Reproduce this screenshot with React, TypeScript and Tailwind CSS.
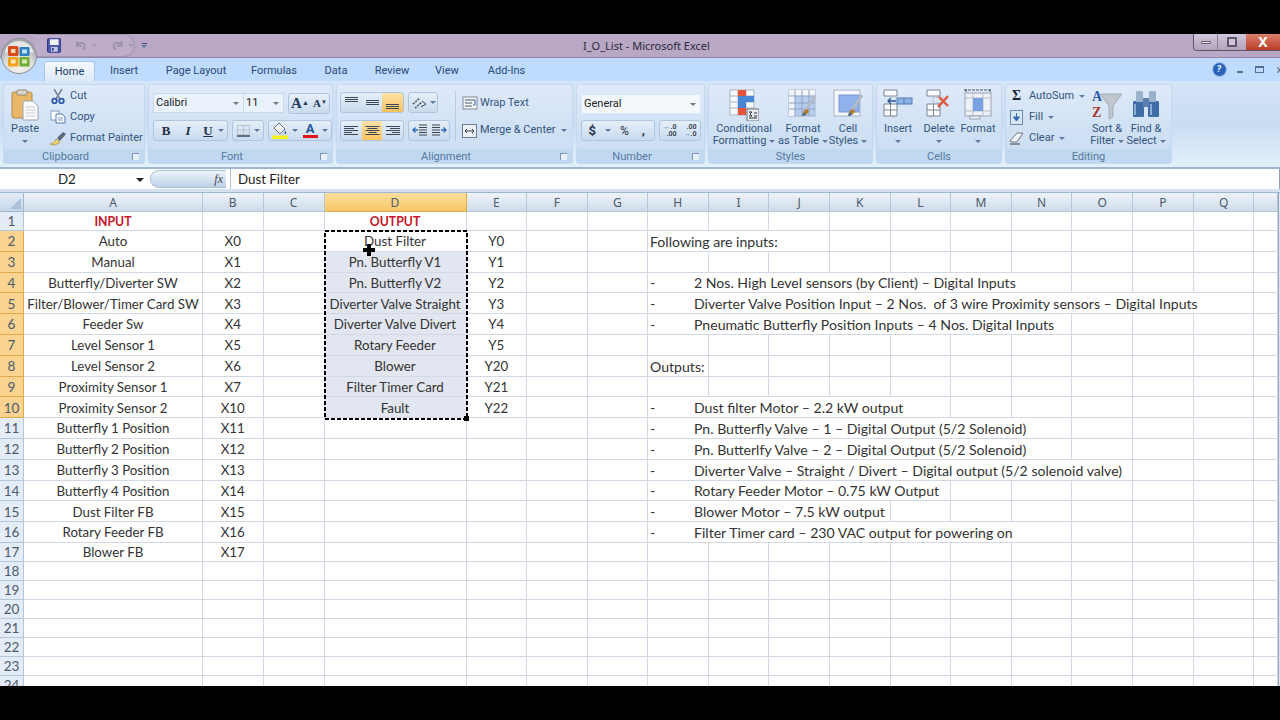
import * as React from "react";

const colA = ["INPUT", "Auto", "Manual", "Butterfly/Diverter SW", "Filter/Blower/Timer Card SW", "Feeder Sw", "Level Sensor 1", "Level Sensor 2", "Proximity Sensor 1", "Proximity Sensor 2", "Butterfly 1 Position", "Butterfly 2 Position", "Butterfly 3 Position", "Butterfly 4 Position", "Dust Filter FB", "Rotary Feeder FB", "Blower FB"];
const colB = ["", "X0", "X1", "X2", "X3", "X4", "X5", "X6", "X7", "X10", "X11", "X12", "X13", "X14", "X15", "X16", "X17"];
const colD = ["OUTPUT", "Dust Filter", "Pn. Butterfly V1", "Pn. Butterfly V2", "Diverter Valve Straight", "Diverter Valve Divert", "Rotary Feeder", "Blower", "Filter Timer Card", "Fault"];
const colE = ["", "Y0", "Y1", "Y2", "Y3", "Y4", "Y5", "Y20", "Y21", "Y22"];
const letters = ["A", "B", "C", "D", "E", "F", "G", "H", "I", "J", "K", "L", "M", "N", "O", "P", "Q", ""];

type Note = { text: string; n: number; span: string; dash?: boolean };
const notes: Record<number, Note> = {
  2: { text: "Following are inputs:", n: 3, span: "col-span-3" },
  4: { text: "2 Nos. High Level sensors (by Client) – Digital Inputs", n: 7, span: "col-span-7", dash: true },
  5: { text: "Diverter Valve Position Input – 2 Nos.  of 3 wire Proximity sensors – Digital Inputs", n: 10, span: "col-span-10", dash: true },
  6: { text: "Pneumatic Butterfly Position Inputs – 4 Nos. Digital Inputs", n: 7, span: "col-span-7", dash: true },
  8: { text: "Outputs:", n: 1, span: "col-span-1" },
  10: { text: "Dust filter Motor – 2.2 kW output", n: 5, span: "col-span-5", dash: true },
  11: { text: "Pn. Butterfly Valve – 1 – Digital Output (5/2 Solenoid)", n: 7, span: "col-span-7", dash: true },
  12: { text: "Pn. Butterlfy Valve – 2 – Digital Output (5/2 Solenoid)", n: 7, span: "col-span-7", dash: true },
  13: { text: "Diverter Valve – Straight / Divert – Digital output (5/2 solenoid valve)", n: 8, span: "col-span-8", dash: true },
  14: { text: "Rotary Feeder Motor – 0.75 kW Output", n: 5, span: "col-span-5", dash: true },
  15: { text: "Blower Motor – 7.5 kW output", n: 4, span: "col-span-4", dash: true },
  16: { text: "Filter Timer card – 230 VAC output for powering on", n: 7, span: "col-span-7", dash: true },
};

const gridLine = "border-r border-b border-[#d2d8e4]";

function Caret({ className = "" }: { className?: string }) {
  return <span className={`inline-block border-x-[3px] border-t-[3px] border-x-transparent border-t-[#5c7ba3] ${className}`} />;
}

function OfficeButton() {
  return (
    <svg className="absolute left-[1px] top-[4px] z-10" width="36" height="36" viewBox="0 0 36 36">
      <defs>
        <radialGradient id="orb" cx="50%" cy="85%" r="70%">
          <stop offset="0" stopColor="#f4f1ea" />
          <stop offset="0.6" stopColor="#dcdcdc" />
          <stop offset="1" stopColor="#a5a8ad" />
        </radialGradient>
      </defs>
      <circle cx="18" cy="18" r="17.5" fill="url(#orb)" stroke="#8b8d92" />
      <path d="M4 15a14 12 0 0 1 28 0c-8-3-20-3-28 0z" fill="#fff" opacity="0.7" />
      <rect x="7" y="8" width="10.500" height="10" rx="1.5" fill="#d9491c" />
      <rect x="10" y="11" width="4.500" height="4" fill="#f6d9b4" />
      <rect x="18.500" y="9" width="10" height="9" rx="1" fill="#2c7fc0" />
      <rect x="21" y="11.500" width="5" height="4" fill="#bfe0f2" />
      <rect x="7" y="19" width="10.500" height="9.500" rx="1.5" fill="#f0a21e" />
      <rect x="10" y="21.500" width="4.500" height="4" fill="#fbe8b4" />
      <rect x="18.500" y="19" width="10" height="9.500" rx="1" fill="#70ac2f" />
      <rect x="21" y="21.500" width="5" height="4" fill="#d6ecb4" />
    </svg>
  );
}

function SaveIcon() {
  return (
    <svg width="15" height="15" viewBox="0 0 15 15">
      <rect x="0.5" y="0.5" width="14" height="14" rx="1" fill="#4a55a8" stroke="#2c3580" />
      <rect x="3" y="1" width="9" height="6" fill="#f2f3fa" />
      <rect x="4" y="9" width="7" height="5" fill="#c7cbe6" />
      <rect x="5" y="10" width="2" height="3" fill="#3a4495" />
    </svg>
  );
}

function UndoIcon({ flip = false }: { flip?: boolean }) {
  return (
    <svg width="13" height="13" viewBox="0 0 13 13" className={flip ? "-scale-x-100" : ""}>
      <path d="M3 2v5h5M3 7c2-4 7-4 8-1 .6 2-.5 4-2 5" fill="none" stroke="#9a90ad" strokeWidth="1.8" />
    </svg>
  );
}

function TitleBar() {
  return (
    <div className="flex h-[24px] items-center border-b border-[#8f86a6] bg-[#b9a7c6]">
      <div className="ml-[35px] flex h-[23px] w-[100px] shrink-0 items-center gap-[4px] rounded-r-full border border-l-0 border-[#a596b3] bg-[#bdacca] pl-[12px]">
        <SaveIcon />
        <span className="w-[5px]" />
        <UndoIcon />
        <Caret className="border-t-[#a59ab4]" />
        <span className="w-[7px]" />
        <UndoIcon flip />
        <Caret className="border-t-[#a59ab4]" />
      </div>
      <div className="ml-[6px] flex shrink-0 flex-col items-center gap-[1px]">
        <span className="h-[1px] w-[5px] bg-[#3f4a66]" />
        <Caret className="border-t-[#3f4a66]" />
      </div>
      <div className="min-w-0 flex-1 whitespace-nowrap pl-[436px] pt-[2px] text-[11px] text-[#2a2a3a]">I_O_List - Microsoft Excel</div>
      <div className="flex h-[17px] w-[87px] shrink-0 items-stretch self-start overflow-hidden rounded-bl-[4px] border-b border-l border-[#5c5866]">
        <div className="flex w-[24px] items-center justify-center border-r border-[#8d8398] bg-gradient-to-b from-[#d3c7da] to-[#b2a4bd]">
          <span className="h-[3px] w-[10px] rounded-[1px] border border-[#5d5668] bg-[#eee]" />
        </div>
        <div className="flex w-[28px] items-center justify-center bg-gradient-to-b from-[#d3c7da] to-[#b2a4bd]">
          <span className="h-[10px] w-[10px] rounded-[1px] border-2 border-[#5d5668] bg-[#cfc6d6]" />
        </div>
        <div className="flex flex-1 items-center justify-center bg-gradient-to-b from-[#d9806e] to-[#bb3a22] text-[14px] font-bold leading-none text-white">X</div>
      </div>
    </div>
  );
}

function Tabs() {
  const tabs = [
    ["Insert", "w-[58px]"],
    ["Page Layout", "w-[86px]"],
    ["Formulas", "w-[70px]"],
    ["Data", "w-[54px]"],
    ["Review", "w-[58px]"],
    ["View", "w-[52px]"],
    ["Add-Ins", "w-[67px]"],
  ];
  return (
    <div className="flex h-[23px] items-end bg-[#bfdbff] pl-[44px] font-['Roboto',sans-serif] text-[11px] text-[#2b4a72]">
      <div className="flex h-[20px] w-[51px] items-center justify-center rounded-t-[3px] border border-b-0 border-[#a9c6e8] bg-gradient-to-b from-[#f4f9ff] to-[#dce9f8] pt-[1px] text-[#1d3a60]">Home</div>
      {tabs.map(([name, w]) => (
        <div key={name} className={`flex h-[20px] items-center justify-center pt-[1px] ${w}`}>{name}</div>
      ))}
      <div className="ml-auto mr-[-2px] flex h-[23px] items-center">
        <span className="flex h-[13px] w-[13px] items-center justify-center rounded-full bg-[#2b63b8] text-[9px] font-bold italic leading-none text-white ring-1 ring-[#9cc0ea]">?</span>
        <span className="ml-[11px] mt-[5px] h-[2px] w-[6px] bg-[#55708f]" />
        <span className="ml-[12px] h-[7px] w-[9px] border border-t-2 border-[#55708f]" />
        <span className="ml-[13px] text-[11px] leading-none text-[#55708f]">x</span>
      </div>
    </div>
  );
}

function Group({ label, width, launcher = true, children }: { label: string; width: string; launcher?: boolean; children: React.ReactNode }) {
  return (
    <div className={`flex h-[80px] flex-col overflow-hidden rounded-[3px] border border-[#c4d8ee] bg-gradient-to-b from-[#dfeafa] via-[#d2e2f5] to-[#c9dcf2] ${width}`}>
      <div className="flex h-[64px]">{children}</div>
      <div className="flex flex-1 items-center bg-[#c1d8f1] text-[11px] leading-none text-[#55799f]">
        <span className={`flex-1 text-center ${launcher ? "pr-[5px]" : ""}`}>{label}</span>
        {launcher && (
          <span className="mr-[5px] h-[7px] w-[7px] border-l border-t border-[#7d96b2] bg-[#e8f0f9]" />
        )}
      </div>
    </div>
  );
}

function LargeButton({ icon, top, bottom, width, caret = true }: { icon: React.ReactNode; top: string; bottom?: string; width: string; caret?: boolean }) {
  return (
    <div className={`flex flex-col items-center pt-[4px] text-[11px] leading-[12px] text-[#33557f] ${width}`}>
      <div className="flex h-[34px] items-start justify-center">{icon}</div>
      <span className="whitespace-nowrap">{top}</span>
      <span className="flex h-[12px] items-center gap-[3px] whitespace-nowrap">
        {bottom}
        {caret && <Caret />}
      </span>
    </div>
  );
}

function SmallRow({ icon, label, caret = false }: { icon: React.ReactNode; label: string; caret?: boolean }) {
  return (
    <div className="flex h-[21px] items-center pt-[1px] text-[11px] text-[#33557f]">
      <span className="flex w-[19px] justify-center">{icon}</span>
      <span className="ml-[3px] whitespace-nowrap">{label}</span>
      {caret && <Caret className="ml-[5px]" />}
    </div>
  );
}

function PasteIcon() {
  return (
    <svg width="28" height="32" viewBox="0 0 28 32">
      <rect x="1" y="3" width="20" height="26" rx="2" fill="#e8b868" stroke="#b08a4e" />
      <rect x="6" y="1" width="10" height="5" rx="1" fill="#d9d6cb" stroke="#8c8775" />
      <path d="M12 12h10l5 5v14H12z" fill="#fbfbfb" stroke="#9ca3ad" />
      <path d="M14.5 18h10M14.5 21h10M14.5 24h10M14.5 27h10" stroke="#c5cad2" />
    </svg>
  );
}

function CutIcon() {
  return (
    <svg width="14" height="16" viewBox="0 0 14 16">
      <path d="M3 1l6 10M11 1L5 11" stroke="#7a8696" strokeWidth="1.6" />
      <circle cx="3.5" cy="13" r="2.3" fill="none" stroke="#2b59a8" strokeWidth="1.8" />
      <circle cx="10.5" cy="13" r="2.3" fill="none" stroke="#2b59a8" strokeWidth="1.8" />
    </svg>
  );
}

function CopyIcon() {
  return (
    <svg width="16" height="14" viewBox="0 0 16 14">
      <rect x="1" y="1" width="8" height="9" fill="#fff" stroke="#7f9cc3" />
      <path d="M6 4h6l3 3v6H6z" fill="#fff" stroke="#4f78ad" />
      <path d="M8 8h5M8 10h5" stroke="#7f9cc3" />
    </svg>
  );
}

function PainterIcon() {
  return (
    <svg width="18" height="16" viewBox="0 0 18 16">
      <path d="M1 14c3 0 5-2 6-5l4 3c-2 2-6 4-10 2z" fill="#f3d470" stroke="#a5822e" strokeWidth="0.7" />
      <path d="M8 8l6-6 3 2-6 7z" fill="#5b6a7d" />
    </svg>
  );
}

function Clipboard() {
  return (
    <Group label="Clipboard" width="w-[142px]">
      <LargeButton width="w-[42px]" top="Paste" icon={<PasteIcon />} />
      <div className="flex flex-col pl-[2px]">
        <SmallRow icon={<CutIcon />} label="Cut" />
        <SmallRow icon={<CopyIcon />} label="Copy" />
        <SmallRow icon={<PainterIcon />} label="Format Painter" />
      </div>
    </Group>
  );
}

const cluster = "flex h-[21px] items-center rounded-[3px] border border-[#aec5df] bg-gradient-to-b from-[#e6eff9] to-[#c9daee]";
const combo = "flex h-[20px] items-center border border-[#c6d8ec] bg-[#eaf2fb] text-[11px] text-[#222]";

function Font() {
  return (
    <Group label="Font" width="w-[185px]">
      <div className="flex flex-col gap-[6px] pl-[4px] pt-[8px]">
        <div className="flex">
          <div className={`${combo} w-[91px] justify-between pl-[2px] pr-[4px]`}>Calibri<Caret className="border-t-[#777]" /></div>
          <div className={`${combo} w-[40px] justify-between border-l-0 pl-[2px] pr-[4px]`}>11<Caret className="border-t-[#777]" /></div>
          <div className={`${cluster} ml-[4px] h-[20px] w-[42px] justify-around font-['Liberation_Serif',serif] font-bold leading-none text-[#23395b]`}>
            <span className="text-[15px]">A<sup className="text-[7px]">▲</sup></span>
            <span className="text-[11px]">A<sup className="text-[6px]">▼</sup></span>
          </div>
        </div>
        <div className="flex gap-[4px]">
          <div className={`${cluster} w-[75px] font-['Liberation_Serif',serif] text-[13px] font-bold text-[#1f2f49]`}>
            <span className="w-[24px] text-center">B</span>
            <span className="w-[20px] text-center italic">I</span>
            <span className="w-[20px] text-center underline">U</span>
            <Caret />
          </div>
          <div className={`${cluster} w-[32px] justify-center gap-[4px]`}>
            <svg width="13" height="12" viewBox="0 0 13 12">
              <path d="M.5.5h12v9H.5zM6.5.5v9M.5 5h12" fill="none" stroke="#9aa5b3" strokeDasharray="1 1" />
              <path d="M0 11h13" stroke="#3d4a5c" strokeWidth="1.5" />
            </svg>
            <Caret />
          </div>
          <div className={`${cluster} w-[64px] justify-around px-[1px]`}>
            <svg width="16" height="17" viewBox="0 0 16 17">
              <path d="M7 1l6 6-5 5-6-6z" fill="#f4f6fa" stroke="#5f6f85" />
              <path d="M13 8c1 2 2 3 1 4s-2-1-1-4z" fill="#3f74b8" />
              <rect x="0" y="13.5" width="16" height="3.5" fill="#f5f01e" />
            </svg>
            <Caret />
            <span className="flex flex-col items-center text-[13px] font-bold leading-[12px] text-[#23549a]">
              A
              <span className="h-[3px] w-[15px] bg-[#e0141c]" />
            </span>
            <Caret />
          </div>
        </div>
      </div>
    </Group>
  );
}

function Lines({ widths, y, active = false, align = "center" }: { widths: number[]; y: number; active?: boolean; align?: "left" | "center" | "right" }) {
  return (
    <span className={`flex h-full w-[21px] items-center justify-center ${active ? "bg-gradient-to-b from-[#fde3a8] to-[#fbc35d]" : ""}`}>
      <svg width="15" height="14" viewBox="0 0 15 14">
        {widths.map((w, i) => {
          const x = align === "left" ? 0 : align === "right" ? 15 - w : (15 - w) / 2;
          return <rect key={i} x={x} y={y + i * 2} width={w} height="1" fill="#3c4754" />;
        })}
      </svg>
    </span>
  );
}

function IndentIcon({ flip = false }: { flip?: boolean }) {
  return (
    <svg width="15" height="13" viewBox="0 0 15 13" className={flip ? "-scale-x-100" : ""}>
      <path d="M7 1h8M7 3.5h8M7 6h8M7 8.5h8M7 11h8" stroke="#3c4754" />
      <path d="M6 6H1M3.5 3.5L1 6l2.5 2.5" fill="none" stroke="#2f6db8" strokeWidth="1.4" />
    </svg>
  );
}

function Alignment() {
  return (
    <Group label="Alignment" width="w-[237px]">
      <div className="flex flex-col gap-[7px] pl-[3px] pt-[7px]">
        <div className="flex gap-[4px]">
          <div className={`${cluster} h-[20px] w-[64px] overflow-hidden`}>
            <Lines widths={[13, 13, 13]} y={1} />
            <Lines widths={[13, 13, 13]} y={4} />
            <Lines widths={[13, 13, 13]} y={8} active />
          </div>
          <div className={`${cluster} h-[20px] w-[30px] justify-center gap-[2px]`}>
            <svg width="17" height="14" viewBox="0 0 17 14">
              <path d="M2 8l7-6M4 12l7-6" stroke="#3c4754" strokeWidth="1.4" strokeDasharray="2 1" />
              <path d="M10 11l5-3-4-3" fill="none" stroke="#3c4754" />
            </svg>
            <Caret />
          </div>
        </div>
        <div className="flex gap-[4px]">
          <div className={`${cluster} w-[64px] overflow-hidden`}>
            <Lines widths={[14, 10, 14, 8, 14]} y={2} align="left" />
            <Lines widths={[14, 10, 14, 8, 14]} y={2} active />
            <Lines widths={[14, 10, 14, 8, 14]} y={2} align="right" />
          </div>
          <div className={`${cluster} w-[42px] justify-around`}>
            <IndentIcon />
            <IndentIcon flip />
          </div>
        </div>
      </div>
      <div className="ml-[5px] mt-[6px] h-[50px] w-[1px] bg-[#b6cbe2]" />
      <div className="ml-[6px] flex flex-col gap-[7px] whitespace-nowrap pt-[8px] text-[11px] text-[#33557f]">
        <div className="flex h-[20px] items-center gap-[2px]">
          <svg width="16" height="14" viewBox="0 0 16 14">
            <rect x="1" y="1" width="14" height="12" fill="#f6f8fb" stroke="#7c8796" />
            <path d="M3 4h10M3 7h7M3 10h7" stroke="#4a5666" />
            <path d="M13 4v5h-2" fill="none" stroke="#2f6db8" />
          </svg>
          Wrap Text
        </div>
        <div className="flex h-[21px] items-center gap-[3px]">
          <svg width="15" height="14" viewBox="0 0 15 14">
            <rect x="0.5" y="0.5" width="14" height="13" fill="#eef2f7" stroke="#6f7c8d" />
            <path d="M3 7h9M5 5L3 7l2 2M10 5l2 2-2 2" fill="none" stroke="#2f3c4f" />
          </svg>
          Merge &amp; Center
          <Caret className="ml-[2px]" />
        </div>
      </div>
    </Group>
  );
}

function NumberGroup() {
  return (
    <Group label="Number" width="w-[129px]">
      <div className="flex flex-col gap-[6px] pl-[4px] pt-[9px]">
        <div className={`${combo} w-[120px] justify-between border-[#dce8f5] bg-[#f3f8fd] pl-[2px] pr-[4px]`}>General<Caret className="border-t-[#777]" /></div>
        <div className="flex gap-[4px]">
          <div className={`${cluster} w-[74px] text-[#27344a]`}>
            <span className="w-[14px] text-right text-[13px] font-bold leading-none">$</span>
            <Caret className="ml-[9px]" />
            <span className="ml-[9px] text-[12px] leading-none">%</span>
            <span className="ml-[13px] text-[13px] font-bold leading-none">,</span>
          </div>
          <div className={`${cluster} w-[42px] justify-around font-bold text-[#3a4656]`}>
            <span className="flex flex-col items-end text-[7px] leading-[7px]"><span><span className="text-[#2f6db8]">←</span>.0</span><span>.00</span></span>
            <span className="flex flex-col items-end text-[7px] leading-[7px]"><span>.00</span><span><span className="text-[#2f6db8]">→</span>.0</span></span>
          </div>
        </div>
      </div>
    </Group>
  );
}

function ConditionalIcon() {
  return (
    <svg width="30" height="32" viewBox="0 0 30 32">
      <rect x="1" y="1" width="24" height="25" fill="#f7f9fc" stroke="#aab4c2" />
      <path d="M9 1v25M17 1v25M1 7h24M1 13h24M1 19h24" stroke="#aab4c2" />
      <rect x="9" y="1" width="8" height="6" fill="#e4533a" />
      <rect x="9" y="7" width="16" height="6" fill="#4a86d6" />
      <rect x="9" y="13" width="8" height="6" fill="#4a86d6" />
      <rect x="9" y="19" width="8" height="7" fill="#e4533a" />
      <rect x="18" y="20" width="12" height="12" fill="#e9ecf0" stroke="#6a6f78" />
      <path d="M20 23h3l-2 2 2 2h-3M25 24h3M25 27h3M20 29h8" fill="none" stroke="#2d3340" />
    </svg>
  );
}

function TableIcon() {
  return (
    <svg width="30" height="32" viewBox="0 0 30 32">
      <rect x="1" y="1" width="26" height="26" fill="#b6cdf0" stroke="#a6b3c4" />
      <rect x="1" y="1" width="26" height="6" fill="#f2f5fa" />
      <rect x="1" y="7" width="6" height="20" fill="#f2f5fa" />
      <path d="M7 1v26M14 1v26M21 1v26M1 7h26M1 14h26M1 20h26" stroke="#8fa3c0" />
      <path d="M27 7L18 21" stroke="#b4bac2" strokeWidth="3" />
      <path d="M19 20c-3 1-5 4-5 7 3 0 6-2 7-5z" fill="#b37b2a" />
      <path d="M14 27l4-1-2-3z" fill="#2f6db8" />
    </svg>
  );
}

function CellStylesIcon() {
  return (
    <svg width="30" height="32" viewBox="0 0 30 32">
      <rect x="1" y="1" width="26" height="26" fill="#f5f7fb" stroke="#a6b3c4" />
      <rect x="6" y="6" width="20" height="17" fill="#90b2ec" stroke="#7a98cc" />
      <path d="M29 6L19 21" stroke="#b4bac2" strokeWidth="3" />
      <path d="M20 20c-3 1-5 4-5 7 3 0 6-2 7-5z" fill="#b37b2a" />
      <path d="M15 27l4-1-2-3z" fill="#2f6db8" />
    </svg>
  );
}

function InsertIcon() {
  return (
    <svg width="30" height="30" viewBox="0 0 30 30">
      <path d="M1 1h13v6H1zM1 15h13v12H1zM7.500 15v12M1 21h13" fill="#fafbfd" stroke="#7d8592" />
      <rect x="14" y="9" width="15" height="6" fill="#8db2e6" stroke="#4f78ad" />
      <path d="M21 9v6" stroke="#4f78ad" />
      <path d="M13 12H5M8 9l-3 3 3 3" fill="none" stroke="#27568f" strokeWidth="1.3" />
    </svg>
  );
}

function DeleteIcon() {
  return (
    <svg width="30" height="30" viewBox="0 0 30 30">
      <path d="M3 1h13v6H3zM3 15h13v12H3zM9.500 15v12M3 21h13" fill="#fafbfd" stroke="#7d8592" />
      <rect x="9" y="8" width="10" height="6" fill="none" stroke="#aab2bd" strokeDasharray="2 1" />
      <path d="M15 8l9 9M24 7l-10 11" stroke="#e2553e" strokeWidth="2.4" />
    </svg>
  );
}

function FormatCellsIcon() {
  return (
    <svg width="30" height="31" viewBox="0 0 30 31">
      <path d="M1 1h28M3 0v3M27 0v3" stroke="#4a5666" strokeDasharray="3 1" />
      <rect x="2" y="4" width="26" height="23" fill="#eef1f6" stroke="#98a3b2" />
      <path d="M10 4v23M20 4v23M2 9h26M2 22h26" stroke="#b5bdc9" />
      <rect x="10" y="9" width="10" height="13" fill="#78a2e4" />
      <rect x="7" y="27" width="10" height="3" fill="#eef1f6" stroke="#98a3b2" />
    </svg>
  );
}

function Styles() {
  return (
    <Group label="Styles" width="w-[165px]" launcher={false}>
      <div className="flex pl-[1px]">
        <LargeButton width="w-[68px]" top="Conditional" bottom="Formatting" icon={<ConditionalIcon />} />
        <LargeButton width="w-[50px]" top="Format" bottom="as Table" icon={<TableIcon />} />
        <LargeButton width="w-[40px]" top="Cell" bottom="Styles" icon={<CellStylesIcon />} />
      </div>
    </Group>
  );
}

function Cells() {
  return (
    <Group label="Cells" width="w-[126px]" launcher={false}>
      <div className="flex pl-[1px]">
        <LargeButton width="w-[40px]" top="Insert" icon={<InsertIcon />} />
        <LargeButton width="w-[42px]" top="Delete" icon={<DeleteIcon />} />
        <LargeButton width="w-[36px]" top="Format" icon={<FormatCellsIcon />} />
      </div>
    </Group>
  );
}

function SortIcon() {
  return (
    <svg width="30" height="32" viewBox="0 0 30 32">
      <path d="M8 5h22L21 17v11l-4 2V17z" fill="#c1c6cd" stroke="#8b929c" strokeWidth="0.6" />
      <text x="0" y="12" fontSize="14" fontWeight="700" fontFamily="Liberation Serif" fill="#2e5da8">A</text>
      <text x="0" y="28" fontSize="14" fontWeight="700" fontFamily="Liberation Serif" fill="#a5362c">Z</text>
    </svg>
  );
}

function FindIcon() {
  return (
    <svg width="28" height="30" viewBox="0 0 28 30">
      <rect x="1" y="12" width="11" height="16" rx="1" fill="#3f6da8" />
      <rect x="16" y="12" width="11" height="16" rx="1" fill="#3f6da8" />
      <rect x="4" y="2" width="7" height="11" rx="1" fill="#9cb2cc" />
      <rect x="17" y="2" width="7" height="11" rx="1" fill="#9cb2cc" />
      <rect x="11" y="9" width="6" height="9" fill="#5b81b3" />
      <path d="M3 15v11M19 15v11" stroke="#a9c4e4" strokeWidth="1.5" />
    </svg>
  );
}

function Editing() {
  return (
    <Group label="Editing" width="w-[167px]" launcher={false}>
      <div className="flex w-[82px] flex-col pl-[1px]">
        <SmallRow icon={<span className="font-['Liberation_Serif',serif] text-[14px] font-bold leading-none text-[#20242c]">Σ</span>} label="AutoSum" caret />
        <SmallRow
          icon={
            <svg width="13" height="15" viewBox="0 0 13 15">
              <rect x="0.5" y="0.5" width="12" height="14" fill="#d8e5f5" stroke="#6d8db5" />
              <path d="M6.500 3v6M3.500 7l3 4 3-4z" fill="#2f6db8" stroke="#2f6db8" />
            </svg>
          }
          label="Fill"
          caret
        />
        <SmallRow
          icon={
            <svg width="16" height="13" viewBox="0 0 16 13">
              <path d="M1 9l7-8h6l-6 9H3z" fill="#f3f4f6" stroke="#6e7480" />
              <path d="M1 12h10" stroke="#3d4450" />
            </svg>
          }
          label="Clear"
          caret
        />
      </div>
      <LargeButton width="w-[38px]" top="Sort &" bottom="Filter" icon={<SortIcon />} />
      <LargeButton width="w-[40px]" top="Find &" bottom="Select" icon={<FindIcon />} />
    </Group>
  );
}

function Ribbon() {
  return (
    <div className="flex h-[88px] gap-[3px] border-b-2 border-[#9db6d1] bg-gradient-to-b from-[#d6e5f8] via-[#c9dcf2] to-[#e3f1fc] pl-[3px] pt-[3px] font-['Roboto',sans-serif]">
      <Clipboard />
      <Font />
      <Alignment />
      <NumberGroup />
      <Styles />
      <Cells />
      <Editing />
    </div>
  );
}

function FormulaBar() {
  return (
    <div className="flex h-[24px] flex-col border-b border-[#9db8d6] bg-[#d5e3f1]">
      <div className="flex h-[20px] items-center bg-white font-['Lato',sans-serif] text-[13.3px] text-[#222]">
        <div className="flex w-[148px] items-center pl-[58px] pt-[1px]">
          D2
          <Caret className="ml-[auto] mr-[4px] border-x-[4px] border-t-[4px] border-t-[#222]" />
        </div>
        <div className="ml-[2px] flex h-[18px] w-[76px] items-center justify-end rounded-l-full border border-r-0 border-[#a9bdd3] bg-gradient-to-b from-[#eef4fb] to-[#bfd2e8] pr-[3px] font-['Liberation_Serif',serif] text-[12px] italic text-[#444]">
          fx
        </div>
        <div className="ml-[4px] h-[20px] w-[1px] bg-[#b5c3d2]" />
        <div className="flex h-[20px] flex-1 items-center border-r border-[#8ea2b8] pl-[7px] pt-[1px]">Dust Filter</div>
      </div>
    </div>
  );
}

function Cell({ text, col, row }: { text: string; col: number; row: number }) {
  const selected = col === 3 && row >= 3 && row <= 10;
  const heading = row === 1;
  return (
    <div className={`flex items-center justify-center overflow-visible whitespace-nowrap pt-[2px] ${gridLine} ${selected ? "bg-[#e2e6f0]" : ""} ${heading ? "text-[12.3px] font-bold text-[#c5162b]" : ""}`}>
      {text}
    </div>
  );
}

function Sheet() {
  const rows = Array.from({ length: 24 }, (_, i) => i + 1);
  return (
    <div className="relative min-h-0 flex-1 overflow-hidden">
      <div className="grid w-[1278.5px] grid-cols-[24px_179px_60.5px_61px_142px_60.5px_60.5px_60.5px_repeat(10,60.65px)_24px] grid-rows-[19px_19px_repeat(15,20.8px)_repeat(8,19px)] font-['Lato',sans-serif] text-[13.3px] leading-none text-[#333]">
        <div className="flex items-end justify-end border-r border-b border-[#9fb5cc] bg-gradient-to-b from-[#e2ecf7] to-[#c6d7ea] p-[2px]">
          <span className="h-0 w-0 border-b-[11px] border-l-[11px] border-b-[#a9c0da] border-l-transparent" />
        </div>
        {letters.map((l, i) => (
          <div
            key={i}
            className={`flex items-center justify-center border-r border-b pt-[1px] font-['Noto_Sans',sans-serif] text-[12px] text-[#4c5a6b] ${i === 3 ? "border-[#e0a94a] bg-gradient-to-b from-[#fbdf9b] to-[#f6c768]" : "border-[#b4c6da] bg-gradient-to-b from-[#eef3f9] to-[#cfdcea]"}`}
          >
            {l}
          </div>
        ))}
        {rows.map((r) => {
          const note = notes[r];
          const cells: React.ReactNode[] = [];
          for (let c = 0; c < letters.length; c++) {
            if (c === 7 && note) {
              cells.push(
                <div key={c} className={`flex items-center overflow-hidden whitespace-pre pl-[2px] pt-[2px] text-[14.1px] ${gridLine} ${note.span}`}>
                  {note.dash && <span className="w-[44px]">-</span>}
                  {note.text}
                </div>
              );
              c += note.n - 1;
              continue;
            }
            const text = c === 0 ? colA[r - 1] : c === 1 ? colB[r - 1] : c === 3 ? colD[r - 1] : c === 4 ? colE[r - 1] : "";
            cells.push(<Cell key={c} text={text ?? ""} col={c} row={r} />);
          }
          return (
            <React.Fragment key={r}>
              <div className={`flex items-center justify-center border-r border-b pt-[2px] font-['Lato',sans-serif] text-[13.5px] text-[#4c5a6b] ${r >= 2 && r <= 10 ? "border-[#e0a94a] bg-[#f9d38f]" : "border-[#b4c6da] bg-[#e4ecf7]"}`}>
                {r}
              </div>
              {cells}
            </React.Fragment>
          );
        })}
      </div>
      <svg className="absolute left-[322.500px] top-[36px]" width="146" height="192" viewBox="0 0 146 192">
        <rect x="2" y="2" width="142" height="188" fill="none" stroke="#000" strokeWidth="2" strokeDasharray="4 2" />
        <rect x="141" y="187" width="5" height="5" fill="#000" />
      </svg>
      <svg className="absolute left-[363px] top-[51px]" width="12" height="12" viewBox="0 0 12 12">
        <path d="M4 0h4v4h4v4H8v4H4V8H0V4h4z" fill="#000" />
      </svg>
      <div className="absolute right-0 top-0 h-full w-[2px] border-l border-[#8ea2b8] bg-[#dfe8f3]" />
    </div>
  );
}

export default function App() {
  return (
    <div className="flex h-screen w-[1280px] flex-col overflow-hidden bg-black">
      <div className="h-[34px] shrink-0" />
      <div className="relative flex min-h-0 flex-1 flex-col bg-white font-['Noto_Sans',sans-serif]">
        <OfficeButton />
        <TitleBar />
        <Tabs />
        <Ribbon />
        <FormulaBar />
        <Sheet />
      </div>
      <div className="h-[34px] shrink-0" />
    </div>
  );
}
